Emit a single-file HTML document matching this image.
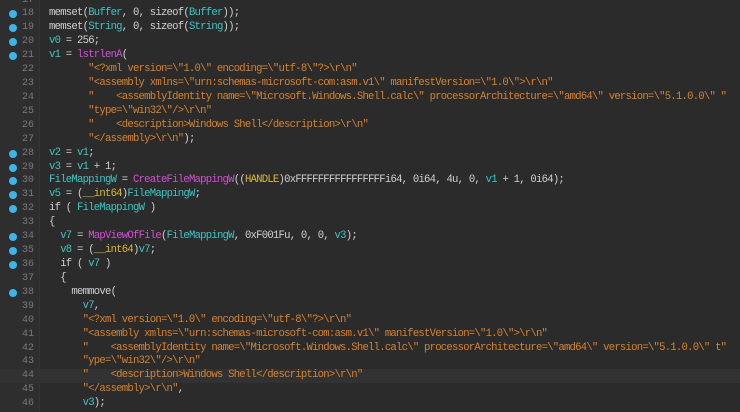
<!DOCTYPE html>
<html><head><meta charset="utf-8"><style>
html,body{margin:0;padding:0;width:740px;height:412px;overflow:hidden;background:#2b2b2b;}
#g{position:absolute;left:0;top:0;width:39px;height:412px;background:#2e2e2e;border-right:1px solid #353535;}
#c{position:absolute;left:0;top:-6.5px;width:740px;font-family:"Liberation Mono",monospace;font-size:10.6px;letter-spacing:-0.76px;}
.l{position:relative;height:13.93px;line-height:13.93px;white-space:pre;color:#d0d0d0;}
.l.h{background:#323232;}
.n{position:absolute;left:15px;width:19px;text-align:right;color:#7a7a7a;letter-spacing:0;font-size:10px;}
.d{position:absolute;left:9px;top:3px;width:8px;height:8px;border-radius:50%;background:#3fb4ea;}
.t{position:absolute;left:49px;}
.s{color:#d7832c}.v{color:#3cc6c6}.f{color:#d44fd4}.y{color:#d8b83c}
</style></head><body>
<div id="g"></div>
<div id="c">
<div class="l"><span class="n">17</span></div>
<div class="l"><span class="d"></span><span class="n">18</span><span class="t">memset(<span class="v">Buffer</span>, 0, sizeof(<span class="v">Buffer</span>));</span></div>
<div class="l"><span class="d"></span><span class="n">19</span><span class="t">memset(<span class="v">String</span>, 0, sizeof(<span class="v">String</span>));</span></div>
<div class="l"><span class="d"></span><span class="n">20</span><span class="t"><span class="v">v0</span> = 256;</span></div>
<div class="l"><span class="d"></span><span class="n">21</span><span class="t"><span class="v">v1</span> = <span class="f">lstrlenA</span>(</span></div>
<div class="l"><span class="n">22</span><span class="t s">       "&lt;?xml version=\"1.0\" encoding=\"utf-8\"?&gt;\r\n"</span></div>
<div class="l"><span class="n">23</span><span class="t s">       "&lt;assembly xmlns=\"urn:schemas-microsoft-com:asm.v1\" manifestVersion=\"1.0\"&gt;\r\n"</span></div>
<div class="l"><span class="n">24</span><span class="t s">       "    &lt;assemblyIdentity name=\"Microsoft.Windows.Shell.calc\" processorArchitecture=\"amd64\" version=\"5.1.0.0\" "</span></div>
<div class="l"><span class="n">25</span><span class="t s">       "type=\"win32\"/&gt;\r\n"</span></div>
<div class="l"><span class="n">26</span><span class="t s">       "    &lt;description&gt;Windows Shell&lt;/description&gt;\r\n"</span></div>
<div class="l"><span class="n">27</span><span class="t"><span class="s">       "&lt;/assembly&gt;\r\n"</span>);</span></div>
<div class="l"><span class="d"></span><span class="n">28</span><span class="t"><span class="v">v2</span> = <span class="v">v1</span>;</span></div>
<div class="l"><span class="d"></span><span class="n">29</span><span class="t"><span class="v">v3</span> = <span class="v">v1</span> + 1;</span></div>
<div class="l"><span class="d"></span><span class="n">30</span><span class="t"><span class="v">FileMappingW</span> = <span class="f">CreateFileMappingW</span>((<span class="y">HANDLE</span>)0xFFFFFFFFFFFFFFFFi64, 0i64, 4u, 0, <span class="v">v1</span> + 1, 0i64);</span></div>
<div class="l"><span class="d"></span><span class="n">31</span><span class="t"><span class="v">v5</span> = (<span class="y">__int64</span>)<span class="v">FileMappingW</span>;</span></div>
<div class="l"><span class="d"></span><span class="n">32</span><span class="t">if ( <span class="v">FileMappingW</span> )</span></div>
<div class="l"><span class="n">33</span><span class="t">{</span></div>
<div class="l"><span class="d"></span><span class="n">34</span><span class="t">  <span class="v">v7</span> = <span class="f">MapViewOfFile</span>(<span class="v">FileMappingW</span>, 0xF001Fu, 0, 0, <span class="v">v3</span>);</span></div>
<div class="l"><span class="d"></span><span class="n">35</span><span class="t">  <span class="v">v8</span> = (<span class="y">__int64</span>)<span class="v">v7</span>;</span></div>
<div class="l"><span class="d"></span><span class="n">36</span><span class="t">  if ( <span class="v">v7</span> )</span></div>
<div class="l"><span class="n">37</span><span class="t">  {</span></div>
<div class="l"><span class="d"></span><span class="n">38</span><span class="t">    memmove(</span></div>
<div class="l"><span class="n">39</span><span class="t">      <span class="v">v7</span>,</span></div>
<div class="l"><span class="n">40</span><span class="t s">      "&lt;?xml version=\"1.0\" encoding=\"utf-8\"?&gt;\r\n"</span></div>
<div class="l"><span class="n">41</span><span class="t s">      "&lt;assembly xmlns=\"urn:schemas-microsoft-com:asm.v1\" manifestVersion=\"1.0\"&gt;\r\n"</span></div>
<div class="l"><span class="n">42</span><span class="t s">      "    &lt;assemblyIdentity name=\"Microsoft.Windows.Shell.calc\" processorArchitecture=\"amd64\" version=\"5.1.0.0\" t"</span></div>
<div class="l"><span class="n">43</span><span class="t s">      "ype=\"win32\"/&gt;\r\n"</span></div>
<div class="l h"><span class="n">44</span><span class="t s">      "    &lt;description&gt;Windows Shell&lt;/description&gt;\r\n"</span></div>
<div class="l"><span class="n">45</span><span class="t"><span class="s">      "&lt;/assembly&gt;\r\n"</span>,</span></div>
<div class="l"><span class="n">46</span><span class="t">      <span class="v">v3</span>);</span></div>
</div>
</body></html>
